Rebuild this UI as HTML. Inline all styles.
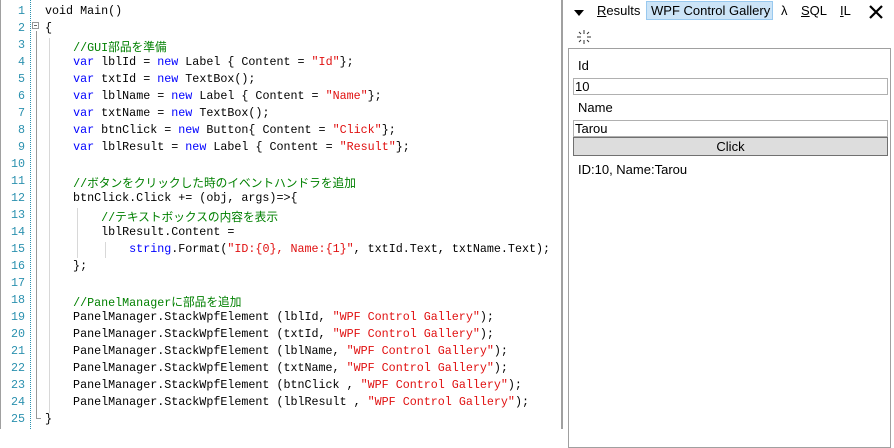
<!DOCTYPE html>
<html><head><meta charset="utf-8"><style>
body{margin:0;width:894px;height:429px;background:#fff;position:relative;overflow:hidden;font-family:"Liberation Sans","Noto Sans CJK JP",sans-serif}
#ed{position:absolute;left:0;top:0;width:563px;height:429px;border-left:1px solid #a0a0a0;border-right:1px solid #a0a0a0;box-sizing:border-box}
.ln{position:absolute;left:0;width:25px;text-align:right;color:#2b91af;font:11.7px "Liberation Mono",monospace}
.cd{position:absolute;left:45px;white-space:pre;font:11.7px "Liberation Mono","Noto Sans CJK JP",monospace;color:#000}
.k{color:#0000ff}.c{color:#008000}.s{color:#e01010}
#dots{position:absolute;left:29px;top:0;height:429px;border-left:1px dotted #2b91af}
.vl{position:absolute;border-left:1px solid #d8d8d8}
#rp{position:absolute;left:561px;top:0;width:333px;height:429px;border-left:1px solid #a0a0a0;box-sizing:border-box;font-size:13px}
.t{position:absolute;top:3px;font-size:13px;color:#000}
#box{position:absolute;left:6px;top:48px;width:323px;height:400px;border:1px solid #a0a0a0;box-sizing:border-box}
.tb{position:absolute;left:4px;width:315px;height:17px;border:1px solid #b0b0b0;box-sizing:border-box;font-size:13px;line-height:15px;padding-left:1px}
</style></head><body>
<div id="ed">
<div id="dots"></div>
<div style="position:absolute;left:31px;top:22px;width:7px;height:7px;border:1px solid #999;box-sizing:border-box"></div>
<div style="position:absolute;left:33px;top:25px;width:3px;border-top:1px solid #666"></div>
<div style="position:absolute;left:35px;top:31px;height:387px;border-left:1px solid #999"></div>
<div style="position:absolute;left:35px;top:418px;width:5px;border-top:1px solid #999"></div>
<div class="vl" style="left:48px;top:38px;height:375px"></div>
<div class="vl" style="left:76px;top:208px;height:50px"></div>
<div class="vl" style="left:104px;top:242px;height:16px"></div>
</div>
<div id="code"></div>
<script>
var L=[
'void Main()',
'{',
'    <i class=c>//GUI部品を準備</i>',
'    <b class=k>var</b> lblId = <b class=k>new</b> Label { Content = <b class=s>"Id"</b>};',
'    <b class=k>var</b> txtId = <b class=k>new</b> TextBox();',
'    <b class=k>var</b> lblName = <b class=k>new</b> Label { Content = <b class=s>"Name"</b>};',
'    <b class=k>var</b> txtName = <b class=k>new</b> TextBox();',
'    <b class=k>var</b> btnClick = <b class=k>new</b> Button{ Content = <b class=s>"Click"</b>};',
'    <b class=k>var</b> lblResult = <b class=k>new</b> Label { Content = <b class=s>"Result"</b>};',
'',
'    <i class=c>//ボタンをクリックした時のイベントハンドラを追加</i>',
'    btnClick.Click += (obj, args)=>{',
'        <i class=c>//テキストボックスの内容を表示</i>',
'        lblResult.Content =',
'            <b class=k>string</b>.Format(<b class=s>"ID:{0}, Name:{1}"</b>, txtId.Text, txtName.Text);',
'    };',
'',
'    <i class=c>//PanelManagerに部品を追加</i>',
'    PanelManager.StackWpfElement (lblId, <b class=s>"WPF Control Gallery"</b>);',
'    PanelManager.StackWpfElement (txtId, <b class=s>"WPF Control Gallery"</b>);',
'    PanelManager.StackWpfElement (lblName, <b class=s>"WPF Control Gallery"</b>);',
'    PanelManager.StackWpfElement (txtName, <b class=s>"WPF Control Gallery"</b>);',
'    PanelManager.StackWpfElement (btnClick , <b class=s>"WPF Control Gallery"</b>);',
'    PanelManager.StackWpfElement (lblResult , <b class=s>"WPF Control Gallery"</b>);',
'}'];
var h='';for(var i=0;i<L.length;i++){var y=4+i*17;h+='<div class=ln style="top:'+y+'px">'+(i+1)+'</div><div class=cd style="top:'+y+'px">'+L[i]+'</div>';}
document.getElementById('code').innerHTML=h.replace(/<b /g,'<span ').replace(/<\/b>/g,'</span>').replace(/<i /g,'<span ').replace(/<\/i>/g,'</span>');
</script>
<div id="rp">
<div style="position:absolute;left:12px;top:10px;width:0;height:0;border-left:5px solid transparent;border-right:5px solid transparent;border-top:6px solid #000"></div>
<div class="t" style="left:35px"><u>R</u>esults</div>
<div style="position:absolute;left:84px;top:1px;width:127px;height:19px;background:#cce4f7;border:1px solid #99c9ef;box-sizing:border-box"></div>
<div class="t" style="left:89px">WPF Control Gallery</div>
<div class="t" style="left:219px">λ</div>
<div class="t" style="left:239px"><u>S</u>QL</div>
<div class="t" style="left:278px"><u>I</u>L</div>
<svg style="position:absolute;left:307px;top:5px" width="14" height="14" viewBox="0 0 14 14" stroke="#000" stroke-width="2.2"><path d="M1 1L13 13M13 1L1 13"/></svg>
<svg style="position:absolute;left:14px;top:29px" width="16" height="16" viewBox="0 0 16 16" stroke="#333" stroke-width="1"><path d="M8 1v4M8 11v4M1 8h4M11 8h4M3 3l2 2M11 11l2 2M13 3l-2 2M3 13l2-2"/></svg>
<div id="box">
<div style="position:absolute;left:9px;top:9px">Id</div>
<div class="tb" style="top:29px">10</div>
<div style="position:absolute;left:9px;top:51px">Name</div>
<div class="tb" style="top:71px">Tarou</div>
<div style="position:absolute;left:4px;top:88px;width:315px;height:19px;background:#dddddd;border:1px solid #707070;box-sizing:border-box;text-align:center;line-height:17px">Click</div>
<div style="position:absolute;left:9px;top:113px">ID:10, Name:Tarou</div>
</div>
</div>
</body></html>
